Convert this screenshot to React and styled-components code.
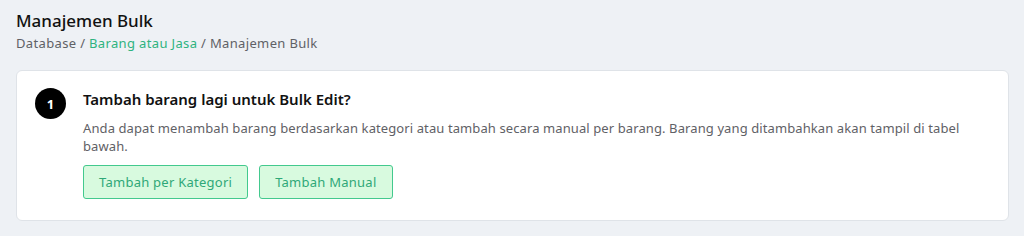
import React from "react";
import styled, { createGlobalStyle } from "styled-components";

const Global = createGlobalStyle`
  html, body { margin: 0; padding: 0; background: #eef1f5; }
  body { font-family: "Noto Sans", "Open Sans", sans-serif; color: #1b1b1f; }
`;

const Page = styled.div`
  padding: 10px 15px 16px 16px;
  display: flex;
  flex-direction: column;
`;

const Title = styled.h1`
  margin: 0;
  font-size: 17px;
  font-weight: 500;
  line-height: 22px;
  color: #111;
`;

const Crumbs = styled.div`
  margin-top: 2px;
  font-size: 13px;
  letter-spacing: 0.35px;
  line-height: 18px;
  color: #5f6166;
`;

const CrumbLink = styled.span`
  color: #2fb37f;
`;

const Card = styled.section`
  margin-top: 18px;
  background: #fff;
  border: 1px solid #dfe3e8;
  border-radius: 6px;
  padding: 17px 18px 21px 18px;
  display: flex;
  gap: 17px;
`;

const Step = styled.div`
  width: 31px;
  height: 31px;
  border-radius: 50%;
  background: #000;
  color: #fff;
  font-size: 13px;
  font-weight: 700;
  display: flex;
  align-items: center;
  justify-content: center;
  flex-shrink: 0;
`;

const Body = styled.div`
  display: flex;
  flex-direction: column;
  padding-top: 1px;
`;

const Heading = styled.h2`
  margin: 0;
  font-size: 15px;
  font-weight: 600;
  line-height: 20px;
  color: #111;
`;

const Text = styled.p`
  margin: 10px 0 0;
  font-size: 13px;
  letter-spacing: 0.1px;
  line-height: 18px;
  color: #5f6166;
`;

const Actions = styled.div`
  display: flex;
  gap: 11px;
  margin-top: 10px;
`;

const Button = styled.button`
  font-family: inherit;
  font-size: 13px;
  letter-spacing: 0.25px;
  color: #2fa878;
  background: #d8fadf;
  border: 1px solid #43c98e;
  border-radius: 3px;
  height: 34px;
  padding: 0 15px;
  cursor: pointer;
`;

export default function App() {
  return (
    <>
      <Global />
      <Page>
        <Title>Manajemen Bulk</Title>
        <Crumbs>
          Database / <CrumbLink>Barang atau Jasa</CrumbLink> / Manajemen Bulk
        </Crumbs>
        <Card>
          <Step>1</Step>
          <Body>
            <Heading>Tambah barang lagi untuk Bulk Edit?</Heading>
            <Text>
              Anda dapat menambah barang berdasarkan kategori atau tambah secara manual per barang. Barang yang ditambahkan akan tampil di tabel bawah.
            </Text>
            <Actions>
              <Button>Tambah per Kategori</Button>
              <Button>Tambah Manual</Button>
            </Actions>
          </Body>
        </Card>
      </Page>
    </>
  );
}
